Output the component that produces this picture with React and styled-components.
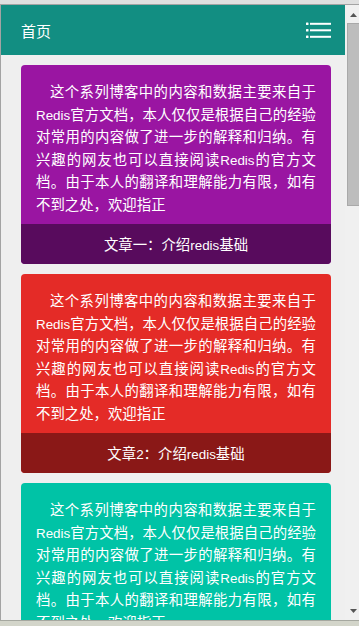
import React from 'react';
import styled, { createGlobalStyle } from 'styled-components';

const GlobalStyle = createGlobalStyle`
    html, body {
        margin: 0;
        padding: 0;
        overflow: hidden;
        background: #efefef;
    }
`;

const Frame = styled.div`
    width: 362px;
    height: 626px;
    display: flex;
    flex-direction: column;
    font-family: "Noto Sans CJK SC", "Liberation Sans", sans-serif;
`;

const TopEdge = styled.div`
    height: 4px;
    flex: none;
    background: #dfdfdf;
    border-bottom: 1px solid #a3a3a3;
`;

const BottomEdge = styled.div`
    height: 5px;
    flex: none;
    background: #d3d5ca;
    border-top: 1px solid #a6a8a0;
`;

const Viewport = styled.div`
    flex: 1;
    min-height: 0;
    display: flex;
    border-left: 1px solid #a3a3a3;
`;

const Page = styled.div`
    width: 344px;
    flex: none;
    overflow-y: auto;
    overflow-x: hidden;
    scrollbar-width: none;
    background: #efefef;
`;

const ScrollBar = styled.div`
    width: 17px;
    flex: none;
    display: flex;
    flex-direction: column;
    background: #f0f0f0;
`;

const ScrollArrow = styled.div`
    height: 17px;
    flex: none;
    display: flex;
    align-items: ${p => (p.$down ? 'flex-start' : 'flex-end')};
    justify-content: center;
    padding: ${p => (p.$down ? '6px 0 0' : '0 0 5px')};
    box-sizing: border-box;
`;

const Track = styled.div`
    flex: 1;
    padding: 1px 2px 0;
`;

const Thumb = styled.div`
    height: 183px;
    box-sizing: border-box;
    background: #bdbdbd;
    border: 1px solid #a9a9a9;
`;

const Header = styled.header`
    height: 50px;
    display: flex;
    align-items: center;
    justify-content: space-between;
    padding: 0 14px 0 20px;
    background: #128e82;
    color: #fff;
    font-size: 15px;
`;

const MenuButton = styled.button`
    border: none;
    background: none;
    padding: 0;
    display: flex;
    color: #fff;
    cursor: pointer;
`;

const List = styled.main`
    display: flex;
    flex-direction: column;
    gap: 10px;
    padding: 10px 14px 10px 20px;
`;

const Card = styled.article`
    border-radius: 4px;
    overflow: hidden;
    background: ${p => p.$bg};
    color: #fff;
`;

const CardText = styled.p`
    margin: 0;
    padding: 15px 15px 9px;
    font-size: 14.4px;
    line-height: 22.5px;
    text-indent: 14px;
    text-align: justify;
`;

const CardTitle = styled.div`
    height: 40px;
    line-height: 40px;
    text-align: center;
    font-size: 14.4px;
    background: ${p => p.$bg};
`;

// latin words sit a little smaller next to the chinese glyphs
const Latin = styled.span`
    font-family: "Liberation Sans", Arial, sans-serif;
    font-size: 13.4px;
    line-height: 1;
`;

function Mixed({ text }) {
  return text.split(/([A-Za-z0-9]+)/).map((part, i) =>
    /^[A-Za-z0-9]+$/.test(part) ? <Latin key={i}>{part}</Latin> : part
  );
}

function MenuIcon() {
  return (
    <svg width="25" height="16" viewBox="0 0 25 16">
      <g fill="currentColor">
        <rect x="0" y="0.5" width="2.5" height="2.5" rx="0.6" />
        <rect x="0" y="7" width="2.5" height="2.5" rx="0.6" />
        <rect x="0" y="13.5" width="2.5" height="2.5" rx="0.6" />
        <rect x="4" y="0.8" width="21" height="2" />
        <rect x="4" y="7.3" width="21" height="2" />
        <rect x="4" y="13.8" width="21" height="2" />
      </g>
    </svg>
  );
}

function Arrow({ down }) {
  return (
    <svg width="7" height="4" viewBox="0 0 7 4">
      <path d={down ? 'M0 0H7L3.5 4Z' : 'M0 4H7L3.5 0Z'} fill="#555" />
    </svg>
  );
}

const intro = '这个系列博客中的内容和数据主要来自于Redis官方文档，本人仅仅是根据自己的经验对常用的内容做了进一步的解释和归纳。有兴趣的网友也可以直接阅读Redis的官方文档。由于本人的翻译和理解能力有限，如有不到之处，欢迎指正';

const palette = [
  { main: '#9a15a2', dark: '#580b5d' },
  { main: '#e42b27', dark: '#8a1817' },
  { main: '#00c3a6', dark: '#007a68' },
];

const posts = ['文章一', '文章2', '文章3', '文章4', '文章5', '文章6', '文章7', '文章8', '文章9'].map((name, i) => ({
  id: i,
  title: `${name}：介绍redis基础`,
  text: intro,
  color: palette[i % palette.length],
}));

export default function App() {
  return (
    <>
      <GlobalStyle />
      <Frame>
        <TopEdge />
        <Viewport>
          <Page>
            <Header>
              <span>首页</span>
              <MenuButton aria-label="menu">
                <MenuIcon />
              </MenuButton>
            </Header>
            <List>
              {posts.map(post => (
                <Card key={post.id} $bg={post.color.main}>
                  <CardText><Mixed text={post.text} /></CardText>
                  <CardTitle $bg={post.color.dark}><Mixed text={post.title} /></CardTitle>
                </Card>
              ))}
            </List>
          </Page>
          <ScrollBar>
            <ScrollArrow>
              <Arrow />
            </ScrollArrow>
            <Track>
              <Thumb />
            </Track>
            <ScrollArrow $down>
              <Arrow down />
            </ScrollArrow>
          </ScrollBar>
        </Viewport>
        <BottomEdge />
      </Frame>
    </>
  );
}
